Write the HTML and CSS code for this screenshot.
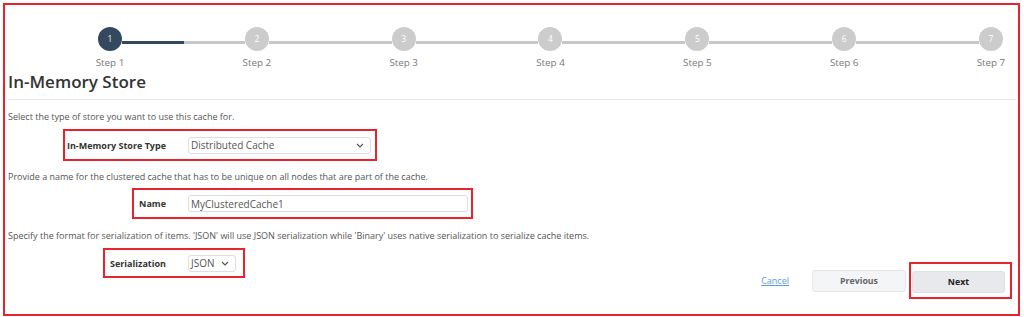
FILE: index.html
```html
<!DOCTYPE html>
<html>
<head>
<meta charset="utf-8">
<link rel="stylesheet" href="styles.css">
</head>
<body>
<div class="frame">
  <div class="stepper">
    <div class="step">
      <div class="node"><div class="dot dot--active">1</div><div class="step-label">Step 1</div></div>
      <div class="bar bar--half"></div>
    </div>
    <div class="step">
      <div class="node"><div class="dot">2</div><div class="step-label">Step 2</div></div>
      <div class="bar"></div>
    </div>
    <div class="step">
      <div class="node"><div class="dot">3</div><div class="step-label">Step 3</div></div>
      <div class="bar"></div>
    </div>
    <div class="step">
      <div class="node"><div class="dot">4</div><div class="step-label">Step 4</div></div>
      <div class="bar"></div>
    </div>
    <div class="step">
      <div class="node"><div class="dot">5</div><div class="step-label">Step 5</div></div>
      <div class="bar"></div>
    </div>
    <div class="step">
      <div class="node"><div class="dot">6</div><div class="step-label">Step 6</div></div>
      <div class="bar"></div>
    </div>
    <div class="step step--last">
      <div class="node"><div class="dot">7</div><div class="step-label">Step 7</div></div>
    </div>
  </div>

  <h1 class="title">In-Memory Store</h1>
  <div class="rule"></div>

  <p class="desc desc--1">Select the type of store you want to use this cache for.</p>
  <div class="field field--type">
    <div class="field-label">In-Memory Store Type</div>
    <div class="control control--type">
      <span class="control-text">Distributed Cache</span>
      <svg class="chev" width="8" height="5" viewBox="0 0 8 5"><path d="M1 1 L4 4 L7 1" fill="none" stroke="#555" stroke-width="1.2"/></svg>
    </div>
  </div>

  <p class="desc desc--2">Provide a name for the clustered cache that has to be unique on all nodes that are part of the cache.</p>
  <div class="field field--name">
    <div class="field-label">Name</div>
    <div class="control control--name">
      <span class="control-text">MyClusteredCache1</span>
    </div>
  </div>

  <p class="desc desc--3">Specify the format for serialization of items. 'JSON' will use JSON serialization while 'Binary' uses native serialization to serialize cache items.</p>
  <div class="last-row">
    <div class="field field--ser">
      <div class="field-label">Serialization</div>
      <div class="control control--ser">
        <span class="control-text">JSON</span>
        <svg class="chev" width="8" height="5" viewBox="0 0 8 5"><path d="M1 1 L4 4 L7 1" fill="none" stroke="#555" stroke-width="1.2"/></svg>
      </div>
    </div>
    <div class="actions">
      <a class="cancel" href="#">Cancel</a>
      <button class="btn btn--prev">Previous</button>
      <div class="highlight">
        <button class="btn btn--next">Next</button>
      </div>
    </div>
  </div>
</div>
</body>
</html>
```

FILE: styles.css
```css
* { box-sizing: border-box; }
html, body { margin: 0; padding: 0; background: #fff; }
body {
  font-family: "Open Sans", "Noto Sans", sans-serif;
  color: #555;
  width: 1024px;
  height: 317px;
  overflow: hidden;
}
.frame {
  margin: 3px 0 0 3px;
  width: 1017px;
  height: 313px;
  border: 2px solid #e8232d;
  padding: 0 2px 0 3px;
}

/* stepper */
.stepper {
  display: flex;
  padding: 22px 13px 0 90px;
}
.step { flex: 1; display: flex; align-items: flex-start; }
.step--last { flex: 0 0 24px; }
.node {
  width: 24px;
  flex: 0 0 24px;
  display: flex;
  flex-direction: column;
  align-items: center;
}
.dot {
  width: 24px;
  height: 24px;
  border-radius: 50%;
  background: #cccccc;
  color: #fff;
  font-size: 8.5px;
  line-height: 24px;
  text-align: center;
}
.dot--active { background: #34495e; color: #e8edf2; }
.step-label {
  margin-top: 5px;
  white-space: nowrap;
  font-size: 9.8px;
  line-height: 13px;
  color: #777;
}
.bar {
  flex: 1;
  height: 3px;
  margin-top: 14px;
  background: #c8c8c8;
}
.bar--half { background: linear-gradient(to right, #34495e 50%, #c8c8c8 50%); }

/* heading */
.title {
  margin: 3px 0 0 0;
  font-size: 17px;
  line-height: 20px;
  font-weight: 600;
  color: #333;
}
.rule {
  height: 1px;
  background: #e6e6e6;
  margin-top: 7px;
}

/* form */
.desc {
  margin: 0;
  font-size: 9px;
  line-height: 12px;
  color: #555;
  white-space: nowrap;
}
.desc--1 { margin-top: 11px; }
.desc--2 { margin-top: 10px; }
.desc--3 { margin-top: 11px; }
.field {
  display: inline-flex;
  align-items: center;
  border: 2px solid #e8232d;
}
.field-label {
  display: flex;
  justify-content: flex-end;
  white-space: nowrap;
  font-size: 9px;
  font-weight: 700;
  color: #333;
  margin-right: 22px;
}
.control {
  display: flex;
  align-items: center;
  justify-content: space-between;
  height: 17px;
  border: 1px solid #dcdfe3;
  border-radius: 3px;
  padding: 0 6px 0 2px;
  background: #fff;
  font-size: 10px;
  color: #555;
}
.control-text { white-space: nowrap; }
.chev { flex: 0 0 auto; }

.field--type { margin: 6px 0 0 55px; height: 32px; padding-right: 4px; }
.field--type .field-label { width: 101px; }
.control--type { width: 183px; }

.field--name { margin: 5px 0 0 124px; height: 31px; padding-right: 3px; }
.field--name .field-label { width: 32px; }
.control--name { width: 280px; }

.last-row {
  display: flex;
  justify-content: space-between;
  align-items: flex-start;
}
.field--ser { margin: 6px 0 0 95px; height: 30px; padding-right: 7px; }
.field--ser .field-label { width: 61px; }
.control--ser { width: 48px; }

.actions {
  display: flex;
  align-items: center;
  margin: 20px 4px 0 0;
}
.cancel {
  font-size: 9px;
  color: #5a9bdc;
  text-decoration: underline;
  margin-right: 23px;
}
.btn {
  font-family: inherit;
  height: 22px;
  border-radius: 3px;
  font-size: 8.8px;
  font-weight: 700;
  cursor: pointer;
}
.btn--prev {
  width: 94px;
  background: #f4f5f6;
  border: 1px solid #e3e5e7;
  color: #666;
  margin-right: 3px;
}
.highlight {
  border: 2px solid #e8232d;
  padding: 7px 5px 4px 1px;
}
.btn--next {
  display: block;
  width: 93px;
  background: #e7e9ec;
  border: 1px solid #dfe2e5;
  color: #222;
}
```
